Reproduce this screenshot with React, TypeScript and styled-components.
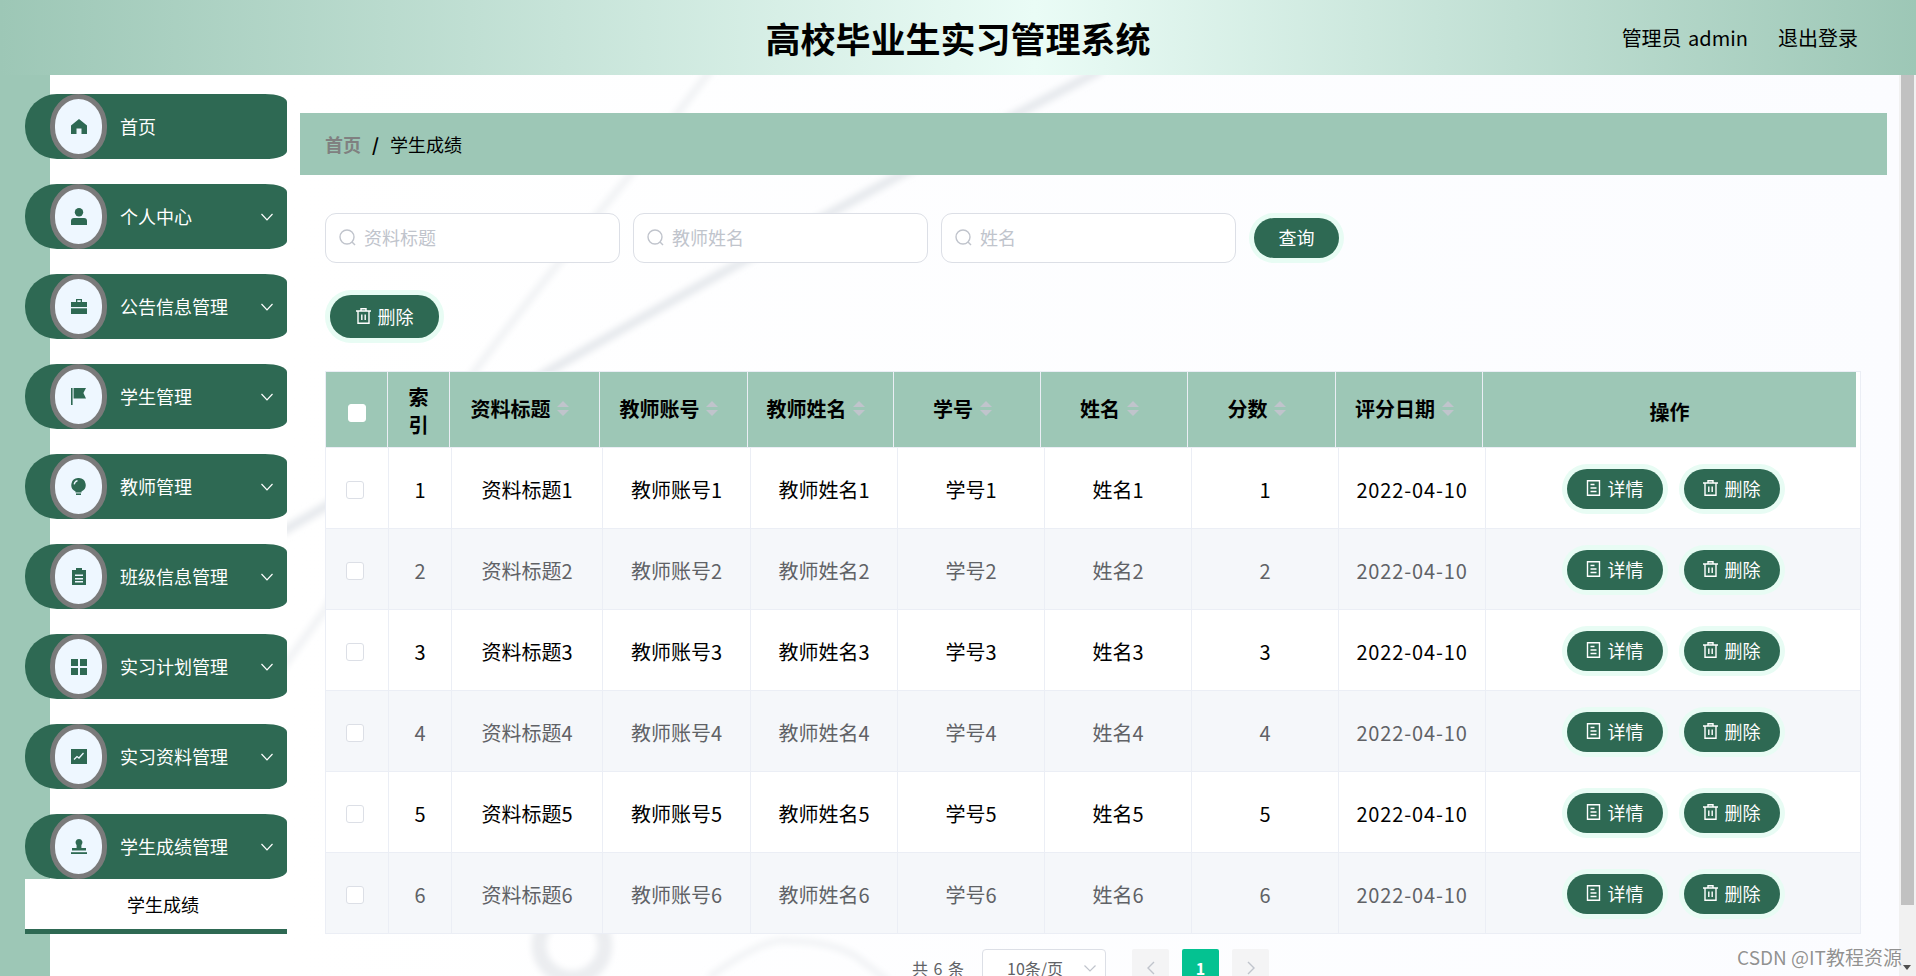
import React from 'react'
import styled, { createGlobalStyle } from 'styled-components'

const GREEN = '#2e6953'
const MINT = '#9dc7b6'
const GLOW = '#e8fcf4'
const LINE = '#ebeef5'
const FONT = '"Noto Sans CJK SC", "Noto Sans", sans-serif'

const GlobalStyle = createGlobalStyle`
  * { box-sizing: border-box; }
  html, body { margin: 0; height: 100%; overflow: hidden; }
  body { font-family: ${FONT}; color: #000; background: #fff; }
`

const Page = styled.div`
  position: relative;
  display: flex;
  flex-direction: column;
  height: 976px;
  overflow: hidden;
`

const Header = styled.header`
  flex: none;
  display: grid;
  grid-template-columns: 1fr auto 1fr;
  align-items: center;
  height: 75px;
  background: linear-gradient(90deg, ${MINT} 0%, #eafcf6 54%, ${MINT} 100%);
`

const Title = styled.h1`
  grid-column: 2;
  margin: 0;
  font-size: 35px;
  line-height: 75px;
  font-weight: 700;
`

const HeaderLinks = styled.div`
  grid-column: 3;
  display: flex;
  justify-content: flex-end;
  gap: 30px;
  padding-right: 58px;
  font-size: 20px;
  line-height: 75px;
  word-spacing: 2px;
`

const Body = styled.div`
  flex: 1;
  display: flex;
  min-height: 0;
`

const Sidebar = styled.nav`
  flex: none;
  width: 287px;
  padding: 19px 0 0 25px;
  background: linear-gradient(90deg, ${MINT} 50px, #fff 50px);
`

const MenuItem = styled.div`
  display: flex;
  align-items: center;
  width: 262px;
  height: 65px;
  padding-left: 25px;
  color: #fff;
  font-size: 18px;
  background: ${GREEN};
  border-radius: 32px 22px 22px 32px / 32px 8px 8px 32px;
  & + & { margin-top: 25px; }
`

const IconBall = styled.span`
  flex: none;
  display: flex;
  align-items: center;
  justify-content: center;
  width: 57px;
  height: 65px;
  color: ${GREEN};
  background: #eef7ff;
  border: 5px solid #7a7a7a;
  border-radius: 50% / 48%;
`

const MenuLabel = styled.span`
  flex: 1;
  margin: 0 0 2px 13px;
  line-height: 26px;
`

const Chevron = styled.svg`
  flex: none;
  width: 12px;
  height: 8px;
  margin-right: 14px;
`

const SubItem = styled.div`
  width: 262px;
  height: 55px;
  padding-left: 14px;
  font-size: 18px;
  line-height: 50px;
  text-align: center;
  background: #fff;
  border-bottom: 5px solid ${GREEN};
`

const Content = styled.main`
  position: relative;
  flex: 1;
  min-width: 0;
  padding: 38px 12px 0 13px;
  overflow: hidden;
  background: linear-gradient(90deg, #fff 0%, #fbfcff 100%);
`

const Backdrop = styled.svg`
  position: absolute;
  top: 0;
  left: 0;
  width: 1612px;
  height: 901px;
`

const Layer = styled.div`
  position: relative;
`

const Breadcrumb = styled.div`
  display: flex;
  align-items: center;
  height: 62px;
  padding-left: 25px;
  font-size: 18px;
  background: ${MINT};
`

const CrumbHome = styled.span`
  font-weight: 700;
  color: #808080;
`

const CrumbSlash = styled.span`
  margin: 0 11px 0 11px;
  font-weight: 700;
`

const SearchRow = styled.div`
  display: flex;
  align-items: center;
  margin: 38px 0 0 25px;
`

const SearchBox = styled.div`
  display: flex;
  align-items: center;
  width: 295px;
  height: 50px;
  margin-right: 13px;
  padding: 0 0 2px 13px;
  color: #c0c4cc;
  font-size: 18px;
  background: #fff;
  border: 1px solid #dcdfe6;
  border-radius: 11px;
`

const SearchGlyph = styled.svg`
  flex: none;
  width: 17px;
  height: 17px;
  margin-right: 8px;
`

const QueryButton = styled.button`
  width: 85px;
  height: 40px;
  margin-left: 5px;
  padding: 0 0 3px;
  color: #fff;
  font: 18px ${FONT};
  background: ${GREEN};
  border: 0;
  border-radius: 20px;
  box-shadow: 0 0 0 5px ${GLOW};
`

const Toolbar = styled.div`
  margin: 32px 0 0 30px;
  height: 43px;
`

const PillButton = styled.button<{ $wide?: boolean }>`
  display: inline-flex;
  align-items: center;
  justify-content: center;
  gap: 7px;
  width: ${(p) => (p.$wide ? '109px' : '96px')};
  height: ${(p) => (p.$wide ? '43px' : '40px')};
  padding: 0 0 2px;
  color: #fff;
  font: 18px ${FONT};
  background: ${GREEN};
  border: 0;
  border-radius: ${(p) => (p.$wide ? '21px' : '20px')};
  box-shadow: 0 0 0 5px ${GLOW};
`

const TableFrame = styled.div`
  width: 1536px;
  margin: 33px 0 0 25px;
  background: #fff;
  border: 1px solid ${LINE};
  border-bottom: 0;
`

const Grid = styled.table<{ $width: number }>`
  display: table;
  width: ${(p) => p.$width}px;
  table-layout: fixed;
  border-collapse: separate;
  border-spacing: 0;
`

const HeadCell = styled.th<{ $pad?: string }>`
  height: 76px;
  padding: ${(p) => p.$pad || '0 0 2px'};
  font-size: 20px;
  font-weight: 700;
  line-height: 28px;
  text-align: center;
  background: ${MINT};
  border-right: 1px solid ${LINE};
  border-bottom: 1px solid ${LINE};
  &:last-child { border-right: 0; }
`

const SortLabel = styled.span`
  display: inline-flex;
  align-items: center;
  margin-right: 3px;
`

const SortCarets = styled.span`
  display: flex;
  flex-direction: column;
  align-items: center;
  gap: 3px;
  width: 25px;
  &::before, &::after {
    content: '';
    width: 0;
    height: 0;
    border-left: 6px solid transparent;
    border-right: 6px solid transparent;
  }
  &::before { border-bottom: 6px solid #c0c4cc; }
  &::after { border-top: 6px solid #c0c4cc; }
`

const Row = styled.tr<{ $even: boolean }>`
  color: ${(p) => (p.$even ? '#606266' : '#000')};
  background: ${(p) => (p.$even ? '#f5f7fa' : '#fff')};
`

const BodyCell = styled.td`
  height: 81px;
  padding: 4px 0 0;
  font-size: 20px;
  line-height: 28px;
  text-align: center;
  border-right: 1px solid ${LINE};
  border-bottom: 1px solid ${LINE};
  &:last-child { border-right: 0; }
`

const CheckCell = styled(BodyCell)`
  padding: 3px 0 0 20px;
  text-align: left;
`

const DateCell = styled(BodyCell)`
  letter-spacing: 0.85px;
`

const ActionCell = styled(BodyCell)`
  padding: 2px 0 0;
`

const Tick = styled.span<{ $head?: boolean }>`
  display: block;
  width: 18px;
  height: 18px;
  margin-top: ${(p) => (p.$head ? '6px' : '0')};
  background: #fff;
  border: 1px solid ${(p) => (p.$head ? '#fff' : '#dcdfe6')};
  border-radius: 3px;
`

const Actions = styled.div`
  display: flex;
  justify-content: center;
  gap: 21px;
`

const Pager = styled.div`
  display: flex;
  align-items: flex-start;
  justify-content: center;
  width: 1536px;
  margin: 15px 0 0 25px;
  padding-left: 8px;
  color: #606266;
  font-size: 16px;
`

const PagerTotal = styled.span`
  margin-right: 18px;
  line-height: 38px;
  word-spacing: 2px;
`

const PagerSelect = styled.div`
  display: flex;
  align-items: center;
  justify-content: space-between;
  width: 124px;
  height: 38px;
  margin-right: 26px;
  padding: 0 9px 0 24px;
  background: #fff;
  border: 1px solid #dcdfe6;
  border-radius: 4px;
`

const PagerCell = styled.span<{ $active?: boolean }>`
  display: flex;
  align-items: center;
  justify-content: center;
  width: 37px;
  height: 38px;
  margin-right: 13px;
  color: ${(p) => (p.$active ? '#fff' : '#c0c4cc')};
  font-weight: 700;
  background: ${(p) => (p.$active ? '#04c291' : '#f4f4f5')};
  border-radius: 2px;
`

const Scrollbar = styled.div`
  flex: none;
  position: relative;
  width: 17px;
  background: #f1f1f1;
`

const Thumb = styled.div`
  width: 13px;
  height: 830px;
  margin-left: 2px;
  background: #c1c1c1;
`

const ScrollArrow = styled.span`
  position: absolute;
  right: 5px;
  bottom: 6px;
  border-left: 4px solid transparent;
  border-right: 4px solid transparent;
  border-top: 5px solid #505050;
`

const Watermark = styled.div`
  position: absolute;
  right: 14px;
  bottom: 6px;
  color: rgba(125, 125, 125, 0.85);
  font-size: 19px;
  line-height: 26px;
  text-shadow: 0 0 2px #fff;
`

type IconProps = { size?: number }

const HomeIcon = () => (
  <svg width="16" height="15" viewBox="0 0 16 15" fill="currentColor">
    <path d="M8 0 L16 6.5 V15 H10.5 V9.5 H5.5 V15 H0 V6.5 Z" />
  </svg>
)
const UserIcon = () => (
  <svg width="16" height="17" viewBox="0 0 16 17" fill="currentColor">
    <circle cx="8" cy="4.2" r="4.2" />
    <path d="M3 10 H13 A3 3 0 0 1 16 13 V17 H0 V13 A3 3 0 0 1 3 10 Z" />
  </svg>
)
const CaseIcon = () => (
  <svg width="16" height="15" viewBox="0 0 16 15" fill="currentColor">
    <path d="M5 0 H11 V3 H16 V8 H0 V3 H5 Z M6.3 1.3 V3 H9.7 V1.3 Z" fillRule="evenodd" />
    <path d="M0 9.3 H16 V15 H0 Z" />
  </svg>
)
const FlagIcon = () => (
  <svg width="15" height="17" viewBox="0 0 15 17" fill="currentColor">
    <path d="M0 0 H1.6 V17 H0 Z" />
    <path d="M2.6 0 H15 L12.4 5 L15 10.6 H2.6 Z" />
  </svg>
)
const BulbIcon = () => (
  <svg width="15" height="17" viewBox="0 0 15 17">
    <path d="M7.5 0 A7 7 0 0 1 10.5 13.4 V14.5 H4.5 V13.4 A7 7 0 0 1 7.5 0 Z" fill="currentColor" />
    <path d="M6.5 2.6 A4.6 4.6 0 0 0 3.2 6.4" fill="none" stroke="#eef7ff" strokeWidth="1.3" />
    <path d="M5 15.4 H10 V17 H5 Z" fill="currentColor" />
  </svg>
)
const OrderIcon = () => (
  <svg width="14" height="17" viewBox="0 0 14 17" fill="currentColor">
    <path
      d="M4 0 H10 V2 H14 V17 H0 V2 H4 Z M3 6.5 V8 H11 V6.5 Z M3 10 V11.5 H11 V10 Z M3 13 V14.5 H11 V13 Z"
      fillRule="evenodd"
    />
  </svg>
)
const GridIcon = () => (
  <svg width="16" height="16" viewBox="0 0 16 16" fill="currentColor">
    <path d="M0 0 H7 V7 H0 Z M9 0 H16 V7 H9 Z M0 9 H7 V16 H0 Z M9 9 H16 V16 H9 Z" />
  </svg>
)
const DataIcon = () => (
  <svg width="16" height="15" viewBox="0 0 16 15">
    <path d="M0 0 H16 V15 H0 Z" fill="currentColor" />
    <path d="M3 10.5 L6 7.5 L8 9 L12.5 4" fill="none" stroke="#eef7ff" strokeWidth="1.3" />
  </svg>
)
const StampIcon = () => (
  <svg width="16" height="15" viewBox="0 0 16 15" fill="currentColor">
    <path d="M8 0 A3.6 3.6 0 0 1 10.4 6.2 V9 H15 V11.5 H1 V9 H5.6 V6.2 A3.6 3.6 0 0 1 8 0 Z" />
    <path d="M0 13.2 H16 V15 H0 Z" />
  </svg>
)

const TrashIcon = ({ size = 16 }: IconProps) => (
  <svg width={size - 1} height={size} viewBox="0 0 15 16" fill="none" stroke="#fff" strokeWidth="1.4">
    <path d="M0 3 H15 M5 3 V0.8 H10 V3 M2 3 V15.3 H13 V3 M5.8 6.5 V12 M9.2 6.5 V12" />
  </svg>
)
const TicketIcon = () => (
  <svg width="15" height="16" viewBox="0 0 15 16" fill="none" stroke="#fff" strokeWidth="1.4">
    <path d="M1.5 0.8 H13.5 V15.2 H1.5 Z M4.5 4.5 H8.5 M4.5 8 H10.5 M4.5 11.5 H10.5" />
  </svg>
)

const menu = [
  { label: '首页', icon: <HomeIcon />, arrow: false },
  { label: '个人中心', icon: <UserIcon />, arrow: true },
  { label: '公告信息管理', icon: <CaseIcon />, arrow: true },
  { label: '学生管理', icon: <FlagIcon />, arrow: true },
  { label: '教师管理', icon: <BulbIcon />, arrow: true },
  { label: '班级信息管理', icon: <OrderIcon />, arrow: true },
  { label: '实习计划管理', icon: <GridIcon />, arrow: true },
  { label: '实习资料管理', icon: <DataIcon />, arrow: true },
  { label: '学生成绩管理', icon: <StampIcon />, arrow: true },
]

const headWidths = [62, 62, 150, 148, 146, 147, 147, 148, 147, 373]
const bodyWidths = [63, 63, 151, 148, 147, 147, 147, 147, 147, 374]
const sortable = ['资料标题', '教师账号', '教师姓名', '学号', '姓名', '分数', '评分日期']
const rows = [1, 2, 3, 4, 5, 6]
const searches = ['资料标题', '教师姓名', '姓名']

const SearchIcon = () => (
  <SearchGlyph viewBox="0 0 17 17" fill="none" stroke="#c0c4cc" strokeWidth="1.4">
    <circle cx="8" cy="8" r="7" />
    <path d="M13 13 L16 16" />
  </SearchGlyph>
)

const Arrow = () => (
  <Chevron viewBox="0 0 12 8" fill="none" stroke="#fff" strokeWidth="1.2">
    <path d="M0.5 1 L6 6.8 L11.5 1" />
  </Chevron>
)

const App = () => (
  <Page>
    <GlobalStyle />
    <Header>
      <Title>高校毕业生实习管理系统</Title>
      <HeaderLinks>
        <span>管理员 admin</span>
        <span>退出登录</span>
      </HeaderLinks>
    </Header>
    <Body>
      <Sidebar>
        {menu.map((item) => (
          <MenuItem key={item.label}>
            <IconBall>{item.icon}</IconBall>
            <MenuLabel>{item.label}</MenuLabel>
            {item.arrow && <Arrow />}
          </MenuItem>
        ))}
        <SubItem>学生成绩</SubItem>
      </Sidebar>
      <Content>
        <Backdrop viewBox="0 0 1612 901" fill="none">
          <defs>
            <filter id="soft"><feGaussianBlur stdDeviation="3" /></filter>
          </defs>
          <g filter="url(#soft)" strokeLinecap="round">
            <path d="M812 -4 L613 100 Q420 205 260 297 Q120 385 -4 456" stroke="#e6e9ed" strokeWidth="9" />
            <path d="M423 -4 L343 100 Q260 200 187 297 Q100 430 38 535 L-4 592" stroke="#f0f2f4" strokeWidth="7" />
            <circle cx="285" cy="870" r="33" stroke="#ebedf0" strokeWidth="15" />
            <path d="M424 901 Q480 860 504 866 Q540 866 567 880 L600 905" stroke="#f0f2f4" strokeWidth="6" />
          </g>
        </Backdrop>
        <Layer>
          <Breadcrumb>
            <CrumbHome>首页</CrumbHome>
            <CrumbSlash>/</CrumbSlash>
            <span>学生成绩</span>
          </Breadcrumb>
          <SearchRow>
            {searches.map((text) => (
              <SearchBox key={text}>
                <SearchIcon />
                {text}
              </SearchBox>
            ))}
            <QueryButton>查询</QueryButton>
          </SearchRow>
          <Toolbar>
            <PillButton $wide>
              <TrashIcon />
              删除
            </PillButton>
          </Toolbar>
          <TableFrame>
            <Grid $width={1530}>
              <colgroup>
                {headWidths.map((w, i) => <col key={i} width={w} />)}
              </colgroup>
              <thead>
                <tr>
                  <HeadCell $pad="0 0 0 22px"><Tick $head /></HeadCell>
                  <HeadCell $pad="2px 12px 0">索引</HeadCell>
                  {sortable.map((name) => (
                    <HeadCell key={name}>
                      <SortLabel>
                        {name}
                        <SortCarets />
                      </SortLabel>
                    </HeadCell>
                  ))}
                  <HeadCell $pad="4px 0 0">操作</HeadCell>
                </tr>
              </thead>
            </Grid>
            <Grid $width={1534}>
              <colgroup>
                {bodyWidths.map((w, i) => <col key={i} width={w} />)}
              </colgroup>
              <tbody>
                {rows.map((n) => (
                  <Row key={n} $even={n % 2 === 0}>
                    <CheckCell><Tick /></CheckCell>
                    <BodyCell>{n}</BodyCell>
                    <BodyCell>资料标题{n}</BodyCell>
                    <BodyCell>教师账号{n}</BodyCell>
                    <BodyCell>教师姓名{n}</BodyCell>
                    <BodyCell>学号{n}</BodyCell>
                    <BodyCell>姓名{n}</BodyCell>
                    <BodyCell>{n}</BodyCell>
                    <DateCell>2022-04-10</DateCell>
                    <ActionCell>
                      <Actions>
                        <PillButton><TicketIcon />详情</PillButton>
                        <PillButton><TrashIcon />删除</PillButton>
                      </Actions>
                    </ActionCell>
                  </Row>
                ))}
              </tbody>
            </Grid>
          </TableFrame>
          <Pager>
            <PagerTotal>共 6 条</PagerTotal>
            <PagerSelect>
              10条/页
              <svg width="12" height="7" viewBox="0 0 12 7" fill="none" stroke="#c0c4cc" strokeWidth="1.2">
                <path d="M0.5 0.5 L6 6 L11.5 0.5" />
              </svg>
            </PagerSelect>
            <PagerCell>
              <svg width="8" height="14" viewBox="0 0 8 14" fill="none" stroke="#c0c4cc" strokeWidth="1.4">
                <path d="M7 1 L1 7 L7 13" />
              </svg>
            </PagerCell>
            <PagerCell $active>1</PagerCell>
            <PagerCell>
              <svg width="8" height="14" viewBox="0 0 8 14" fill="none" stroke="#c0c4cc" strokeWidth="1.4">
                <path d="M1 1 L7 7 L1 13" />
              </svg>
            </PagerCell>
          </Pager>
        </Layer>
      </Content>
      <Scrollbar>
        <Thumb />
        <ScrollArrow />
      </Scrollbar>
    </Body>
    <Watermark>CSDN @IT教程资源</Watermark>
  </Page>
)

export default App
